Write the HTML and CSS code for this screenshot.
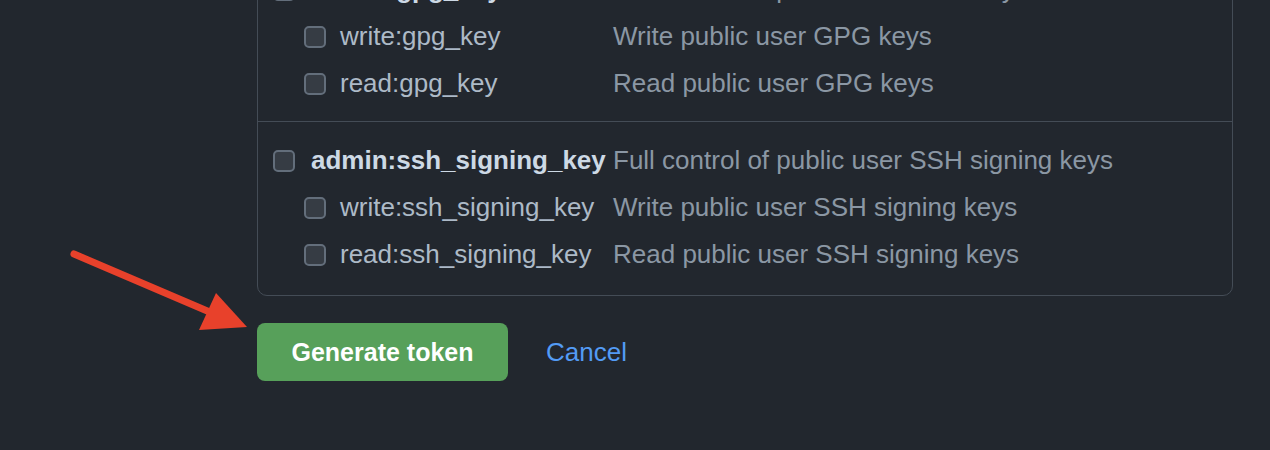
FILE: index.html
```html
<!DOCTYPE html>
<html lang="en">
<head>
    <meta charset="UTF-8">
    <meta name="viewport" content="width=device-width, initial-scale=1.0">
    <title>New personal access token</title>
    <link rel="stylesheet" href="styles.css">
</head>
<body>
    <div class="page">
        <div class="scopes">
            <div class="scope-group">
                <div class="scope-row">
                    <label class="scope-name parent"><span class="check"></span>admin:gpg_key</label>
                    <span class="scope-desc">Full control of public user GPG keys</span>
                </div>
                <div class="scope-row">
                    <label class="scope-name child"><span class="check"></span>write:gpg_key</label>
                    <span class="scope-desc">Write public user GPG keys</span>
                </div>
                <div class="scope-row">
                    <label class="scope-name child"><span class="check"></span>read:gpg_key</label>
                    <span class="scope-desc">Read public user GPG keys</span>
                </div>
            </div>
            <div class="scope-group">
                <div class="scope-row">
                    <label class="scope-name parent"><span class="check"></span>admin:ssh_signing_key</label>
                    <span class="scope-desc">Full control of public user SSH signing keys</span>
                </div>
                <div class="scope-row">
                    <label class="scope-name child"><span class="check"></span>write:ssh_signing_key</label>
                    <span class="scope-desc">Write public user SSH signing keys</span>
                </div>
                <div class="scope-row">
                    <label class="scope-name child"><span class="check"></span>read:ssh_signing_key</label>
                    <span class="scope-desc">Read public user SSH signing keys</span>
                </div>
            </div>
        </div>
        <div class="actions">
            <button type="button" class="btn-primary">Generate token</button>
            <a href="#" class="cancel-link">Cancel</a>
        </div>
    </div>

    <!-- annotation arrow -->
    <svg class="arrow" width="1270" height="450" viewBox="0 0 1270 450">
        <line x1="74" y1="254" x2="212" y2="313" stroke="#e8412b" stroke-width="7" stroke-linecap="round"/>
        <polygon points="216,293 247,327 199,330" fill="#e8412b"/>
    </svg>
</body>
</html>
```

FILE: styles.css
```css
body {
    font-family: "Liberation Sans", Arial, sans-serif;
    margin: 0;
    padding: 0;
    background-color: #22272e;
    color: #adbac7;
    font-size: 26px;
    overflow: hidden;
}
.page {
    margin: -50px 0 0 257px;
    width: 976px;
}
.scopes {
    border: 1px solid #444c56;
    border-radius: 10px;
}
.scope-group {
    padding: 15px 0 17px 15px;
    border-top: 1px solid #444c56;
}
.scope-group:first-child {
    border-top: none;
    padding-bottom: 14px;
}
.scope-row {
    display: grid;
    grid-template-columns: 340px 1fr;
    height: 47px;
    align-items: center;
}
.scope-name {
    display: flex;
    align-items: center;
    white-space: nowrap;
}
.scope-name.parent {
    font-weight: bold;
    color: #cdd9e5;
}
.scope-name.child {
    padding-left: 31px;
}
.check {
    width: 18px;
    height: 18px;
    border: 2px solid #636e7b;
    border-radius: 5px;
    background: #363c44;
    margin-right: 16px;
    flex-shrink: 0;
}
.scope-name.child .check {
    margin-right: 14px;
}
.scope-desc {
    color: #8b97a4;
    white-space: nowrap;
}
.actions {
    display: flex;
    align-items: center;
    gap: 38px;
    margin-top: 27px;
}
.btn-primary {
    font-family: inherit;
    background-color: #57a05a;
    color: #ffffff;
    width: 251px;
    height: 58px;
    border: none;
    border-radius: 8px;
    font-size: 25px;
    font-weight: bold;
    cursor: pointer;
}
.cancel-link {
    color: #539bf5;
    text-decoration: none;
}
.arrow {
    position: absolute;
    top: 0;
    left: 0;
    pointer-events: none;
}
```
